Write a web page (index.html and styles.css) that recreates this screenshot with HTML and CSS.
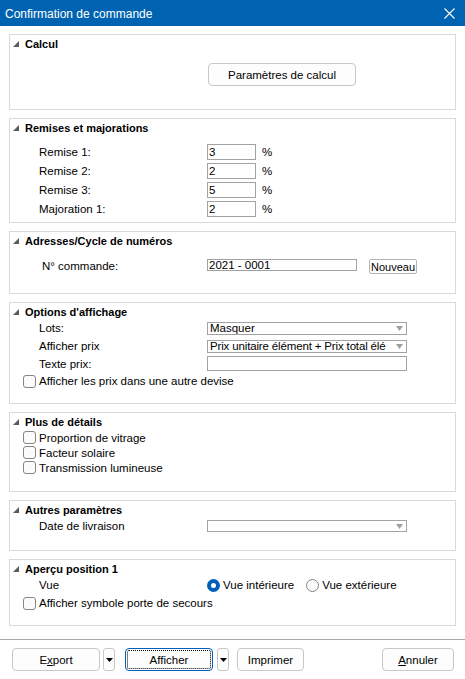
FILE: index.html
```html
<!DOCTYPE html>
<html lang="fr">
<head>
<meta charset="utf-8">
<title>Confirmation de commande</title>
<link rel="stylesheet" href="styles.css">
</head>
<body>
<div class="titlebar">
  <span class="title">Confirmation de commande</span>
  <svg class="close" width="11" height="11" viewBox="0 0 11 11"><path d="M0.5 0.5 L10.5 10.5 M10.5 0.5 L0.5 10.5" stroke="#fff" stroke-width="1.1" fill="none"/></svg>
</div>

<main class="content">
  <section class="group g-calcul">
    <div class="group-head"><svg class="tri" width="6" height="6" viewBox="0 0 6 6"><polygon points="6,0 6,6 0,6" fill="#5c5c5c"/></svg>Calcul</div>
    <div class="calc-row"><button class="btn btn-calc">Paramètres de calcul</button></div>
  </section>

  <section class="group g-remises">
    <div class="group-head"><svg class="tri" width="6" height="6" viewBox="0 0 6 6"><polygon points="6,0 6,6 0,6" fill="#5c5c5c"/></svg>Remises et majorations</div>
    <div class="rows-remises">
      <div class="field-row r19"><span class="lbl">Remise 1:</span><span class="field short">3</span><span class="pct">%</span></div>
      <div class="field-row r19"><span class="lbl">Remise 2:</span><span class="field short">2</span><span class="pct">%</span></div>
      <div class="field-row r19"><span class="lbl">Remise 3:</span><span class="field short">5</span><span class="pct">%</span></div>
      <div class="field-row r19"><span class="lbl">Majoration 1:</span><span class="field short">2</span><span class="pct">%</span></div>
    </div>
  </section>

  <section class="group g-adresses">
    <div class="group-head"><svg class="tri" width="6" height="6" viewBox="0 0 6 6"><polygon points="6,0 6,6 0,6" fill="#5c5c5c"/></svg>Adresses/Cycle de numéros</div>
    <div class="field-row cmd-row"><span class="lbl lbl-cmd">N° commande:</span><span class="field cmd">2021 - 0001</span><button class="btn btn-new">Nouveau</button></div>
  </section>

  <section class="group g-options">
    <div class="group-head"><svg class="tri" width="6" height="6" viewBox="0 0 6 6"><polygon points="6,0 6,6 0,6" fill="#5c5c5c"/></svg>Options d'affichage</div>
    <div class="field-row r18"><span class="lbl">Lots:</span><span class="combo c13"><span class="combo-text">Masquer</span><svg class="arrow" width="7" height="5" viewBox="0 0 7 5"><polygon points="0,0 7,0 3.5,5" fill="#a0a0a0"/></svg></span></div>
    <div class="field-row r18"><span class="lbl">Afficher prix</span><span class="combo c13"><span class="combo-text tight">Prix unitaire élément + Prix total élé</span><svg class="arrow" width="7" height="5" viewBox="0 0 7 5"><polygon points="0,0 7,0 3.5,5" fill="#a0a0a0"/></svg></span></div>
    <div class="field-row r17"><span class="lbl">Texte prix:</span><span class="field wide"></span></div>
    <div class="check-row r18"><span class="cb"></span><span>Afficher les prix dans une autre devise</span></div>
  </section>

  <section class="group g-details">
    <div class="group-head"><svg class="tri" width="6" height="6" viewBox="0 0 6 6"><polygon points="6,0 6,6 0,6" fill="#5c5c5c"/></svg>Plus de détails</div>
    <div class="details-rows">
      <div class="check-row r15"><span class="cb"></span><span>Proportion de vitrage</span></div>
      <div class="check-row r15"><span class="cb"></span><span>Facteur solaire</span></div>
      <div class="check-row r15"><span class="cb"></span><span>Transmission lumineuse</span></div>
    </div>
  </section>

  <section class="group g-autres">
    <div class="group-head"><svg class="tri" width="6" height="6" viewBox="0 0 6 6"><polygon points="6,0 6,6 0,6" fill="#5c5c5c"/></svg>Autres paramètres</div>
    <div class="field-row r18"><span class="lbl">Date de livraison</span><span class="combo c12"><span class="combo-text"></span><svg class="arrow" width="7" height="5" viewBox="0 0 7 5"><polygon points="0,0 7,0 3.5,5" fill="#a0a0a0"/></svg></span></div>
  </section>

  <section class="group g-apercu">
    <div class="group-head"><svg class="tri" width="6" height="6" viewBox="0 0 6 6"><polygon points="6,0 6,6 0,6" fill="#5c5c5c"/></svg>Aperçu position 1</div>
    <div class="field-row r18">
      <span class="lbl">Vue</span>
      <span class="radio-opt"><span class="radio checked"></span>Vue intérieure</span>
      <span class="radio-opt second"><span class="radio"></span>Vue extérieure</span>
    </div>
    <div class="check-row r18"><span class="cb"></span><span>Afficher symbole porte de secours</span></div>
  </section>
</main>

<footer class="footer">
  <button class="btn fbtn w88">E<u>x</u>port</button>
  <button class="btn dd"><svg width="7" height="4" viewBox="0 0 7 4"><polygon points="0,0 7,0 3.5,4" fill="#000"/></svg></button>
  <button class="btn fbtn w88 primary">Afficher</button>
  <button class="btn dd dd2"><svg width="7" height="4" viewBox="0 0 7 4"><polygon points="0,0 7,0 3.5,4" fill="#000"/></svg></button>
  <button class="btn fbtn w67 print">Imprimer</button>
  <span class="spacer"></span>
  <button class="btn fbtn w72"><u>A</u>nnuler</button>
</footer>
</body>
</html>
```

FILE: styles.css
```css
html, body {
  margin: 0;
  padding: 0;
}

body {
  width: 465px;
  height: 679px;
  overflow: hidden;
  background: #ffffff;
  color: #000;
  font-family: "Liberation Sans", Arial, sans-serif;
  font-size: 11.5px;
}

.titlebar {
  height: 26px;
  box-sizing: border-box;
  padding: 1px 10px 0 5px;
  background: #0063b1;
  color: #fff;
  display: flex;
  align-items: center;
  justify-content: space-between;
  font-size: 12px;
}

.close {
  display: block;
  margin-top: -1px;
}

.content {
  padding: 8px 9px 0 9px;
  display: flex;
  flex-direction: column;
  gap: 8px;
}

.group {
  border: 1px solid #d9d9d9;
  box-sizing: border-box;
  padding-top: 2px;
}

.g-calcul { height: 76px; }
.g-remises { height: 105px; }
.g-adresses { height: 63px; }
.g-options { height: 102px; }
.g-details { height: 80px; }
.g-autres { height: 51px; }
.g-apercu { height: 67px; }

.group-head {
  height: 14px;
  line-height: 14px;
  display: flex;
  align-items: center;
  gap: 6px;
  padding-left: 3px;
  font-weight: bold;
  font-size: 11px;
}

.tri {
  display: block;
  flex: none;
}

.calc-row {
  margin-top: 12px;
  padding-left: 198px;
}

.btn {
  font-family: inherit;
  font-size: 11.5px;
  color: #000;
  background: #fdfdfd;
  border: 1px solid #c8c8c8;
  border-radius: 4px;
  box-sizing: border-box;
  padding: 0;
  margin: 0;
  display: flex;
  align-items: center;
  justify-content: center;
}

.btn-calc {
  width: 148px;
  height: 23px;
}

.field-row {
  display: flex;
  align-items: center;
  padding-left: 29px;
}

.lbl {
  width: 168px;
  flex: none;
  white-space: nowrap;
}

.r19 { height: 19px; }
.r18 { height: 18px; }
.r17 { height: 17px; }
.r15 { height: 15px; }

.rows-remises {
  margin-top: 7px;
}

.field {
  box-sizing: border-box;
  border: 1px solid #a2a2a2;
  background: #fff;
  padding: 0 1px;
  display: flex;
  align-items: center;
  white-space: nowrap;
  overflow: hidden;
}

.short {
  width: 49px;
  height: 16px;
}

.pct {
  margin-left: 6px;
}

.cmd-row {
  margin-top: 11px;
  align-items: flex-start;
  padding-left: 32px;
}

.lbl-cmd {
  width: 165px;
  line-height: 14px;
}

.cmd {
  width: 150px;
  height: 12px;
}

.btn-new {
  width: 48px;
  height: 15px;
  margin-left: 12px;
  border-radius: 2px;
  border-color: #b4b4b4;
  font-size: 11px;
}

.combo {
  width: 200px;
  box-sizing: border-box;
  border: 1px solid #a2a2a2;
  background: #fff;
  display: flex;
  align-items: center;
  padding-left: 2px;
}

.c13 { height: 13px; }
.c12 { height: 12px; }

.combo-text {
  flex: 1;
  min-width: 0;
  white-space: nowrap;
  line-height: 12px;
}

.combo-text.tight {
  letter-spacing: -0.15px;
}

.arrow {
  flex: none;
  display: block;
  margin: 0 3px 0 2px;
}

.wide {
  width: 200px;
  height: 15px;
}

.check-row {
  display: flex;
  align-items: center;
  gap: 3px;
  padding-left: 13px;
}

.cb {
  width: 13px;
  height: 13px;
  box-sizing: border-box;
  border: 1px solid #858585;
  border-radius: 3px;
  background: #fbfbfb;
  flex: none;
}

.details-rows {
  margin-top: 1px;
}

.radio-opt {
  display: flex;
  align-items: center;
  gap: 3px;
  white-space: nowrap;
}

.radio-opt.second {
  margin-left: 12px;
}

.radio {
  width: 13px;
  height: 13px;
  box-sizing: border-box;
  border-radius: 50%;
  border: 1px solid #858585;
  background: #fbfbfb;
  flex: none;
}

.radio.checked {
  border: 4px solid #005fb8;
  background: #fff;
}

.footer {
  margin-top: 13px;
  border-top: 1px solid #a8a8a8;
  padding: 8px 11px 0 12px;
  display: flex;
  align-items: flex-start;
}

.fbtn {
  height: 23px;
}

.w88 { width: 88px; }
.w67 { width: 67px; }
.w72 { width: 72px; }

.dd {
  width: 12px;
  height: 23px;
  margin-left: 3px;
  border-radius: 3px;
}

.dd svg {
  display: block;
}

.primary {
  margin-left: 10px;
  border-color: #005fb8;
  outline: 1px dotted #000;
  outline-offset: -3px;
}

.dd2 {
  margin-left: 4px;
}

.print {
  margin-left: 8px;
}

.spacer {
  flex: 1;
}
```
